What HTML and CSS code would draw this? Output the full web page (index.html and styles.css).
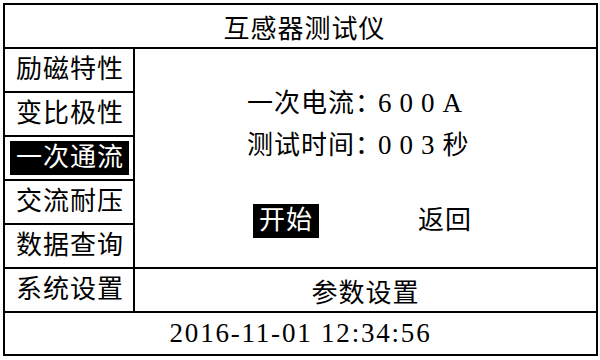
FILE: index.html
```html
<!DOCTYPE html>
<html lang="zh-CN">
<head>
<meta charset="utf-8">
<title>互感器测试仪</title>
<link rel="stylesheet" href="styles.css">
</head>
<body>
<div class="screen">
  <div class="title">互感器测试仪</div>
  <div class="main">
    <ul class="menu">
      <li class="menu-item"><span class="label">励磁特性</span></li>
      <li class="menu-item"><span class="label">变比极性</span></li>
      <li class="menu-item"><span class="label active">一次通流</span></li>
      <li class="menu-item"><span class="label">交流耐压</span></li>
      <li class="menu-item"><span class="label">数据查询</span></li>
    </ul>
    <div class="panel">
      <div class="field"><span class="name">一次电流：</span><span class="num">600A</span></div>
      <div class="field"><span class="name">测试时间：</span><span class="num">003</span><span class="unit">秒</span></div>
      <div class="buttons">
        <span class="btn active">开始</span>
        <span class="btn">返回</span>
      </div>
    </div>
  </div>
  <div class="sysrow">
    <div class="sys-left"><span class="label">系统设置</span></div>
    <div class="sys-right">参数设置</div>
  </div>
  <div class="date">2016-11-01 12:34:56</div>
</div>
</body>
</html>
```

FILE: styles.css
```css
html, body {
  margin: 0;
  padding: 0;
  background: #fff;
}

body {
  width: 600px;
  height: 360px;
  overflow: hidden;
  font-family: "Liberation Serif", "Noto Sans CJK SC", serif;
  color: #000;
}

.screen {
  box-sizing: border-box;
  margin: 3px 0 0 3px;
  width: 595px;
  height: 353px;
  border: 2px solid #000;
  display: flex;
  flex-direction: column;
  font-size: 26px;
  letter-spacing: 1px;
}

.title {
  box-sizing: border-box;
  height: 44px;
  border-bottom: 2px solid #000;
  display: flex;
  align-items: center;
  justify-content: center;
  padding-left: 8px;
}

.main {
  display: grid;
  grid-template-columns: 130px 1fr;
  height: 220px;
}

.menu {
  list-style: none;
  margin: 0;
  padding: 0;
  border-right: 2px solid #000;
}

.menu-item {
  box-sizing: border-box;
  height: 44px;
  border-bottom: 2px solid #000;
  display: flex;
  align-items: center;
  padding-left: 5px;
}

.label {
  display: inline-block;
  line-height: 34px;
  padding: 0 5px 0 6px;
}

.label.active,
.btn.active {
  background: #000;
  color: #fff;
}

.panel {
  box-sizing: border-box;
  border-bottom: 2px solid #000;
  padding: 37px 0 0 112px;
  display: flex;
  flex-direction: column;
  gap: 8px;
}

.field {
  line-height: 34px;
  height: 34px;
  white-space: nowrap;
}

.num {
  letter-spacing: 8px;
  margin-left: -4px;
  font-size: 27px;
}

.buttons {
  margin-top: 34px;
  display: flex;
  align-items: center;
  gap: 93px;
  padding-left: 6px;
}

.btn {
  display: inline-block;
  line-height: 34px;
  padding: 0 6px;
}

.sysrow {
  box-sizing: border-box;
  height: 44px;
  border-bottom: 2px solid #000;
  display: grid;
  grid-template-columns: 130px 1fr;
}

.sys-left {
  border-right: 2px solid #000;
  display: flex;
  align-items: center;
  padding-left: 5px;
}

.sys-right {
  display: flex;
  align-items: center;
  justify-content: center;
}

.date {
  flex: 1;
  display: flex;
  align-items: center;
  justify-content: center;
  font-size: 27px;
  letter-spacing: 1.8px;
}
```
